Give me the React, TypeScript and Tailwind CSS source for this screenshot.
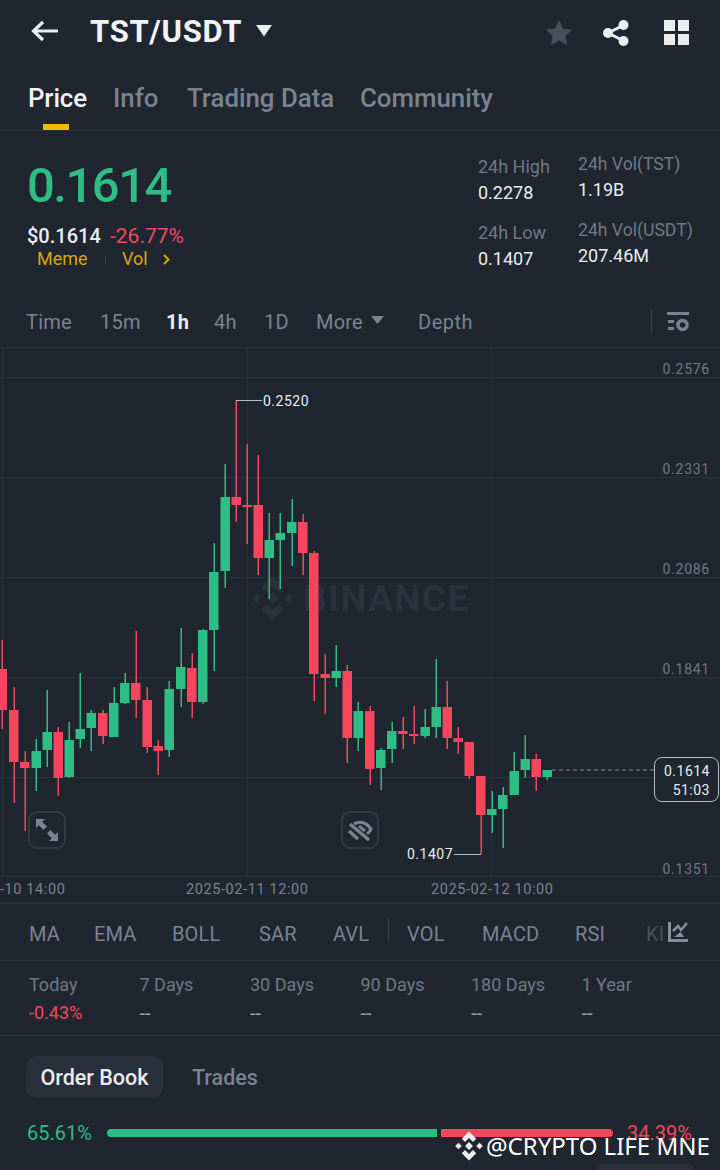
import React from "react";

type C = [number, number, number, number, number, number];
// x, wickTop, wickBottom, bodyTop, bodyBottom, up(1)/down(0)
const candles: C[] = [
  [2, 640, 729, 669, 710, 0],
  [13.5, 687, 803, 710, 762, 0],
  [24.5, 751, 831, 762, 768, 0],
  [36, 739, 791, 751, 768, 1],
  [47, 690, 767, 732, 750, 1],
  [58, 727, 796, 732, 778, 0],
  [69, 722, 778, 740, 777, 1],
  [80, 673, 748, 729, 739, 1],
  [91, 710, 751, 713, 728, 1],
  [102.5, 710, 744, 713, 736, 0],
  [113.5, 687, 737, 703, 737, 1],
  [124.5, 673, 704, 683, 703, 1],
  [135.5, 631, 718, 683, 700, 0],
  [147, 687, 753, 700, 747, 0],
  [158, 740, 775, 746, 751, 0],
  [169, 681, 757, 689, 750, 1],
  [180.5, 628, 707, 667, 689, 1],
  [191.5, 653, 718, 668, 702, 0],
  [202.5, 629, 704, 630, 702, 1],
  [213.5, 543, 671, 572, 630, 1],
  [225, 464, 588, 497, 571, 1],
  [236, 400, 522, 497, 505, 0],
  [247, 444, 544, 505, 507, 0],
  [258, 455, 575, 505, 558, 0],
  [269, 513, 599, 540, 558, 1],
  [280, 513, 589, 533, 540, 1],
  [291.5, 499, 566, 522, 533, 1],
  [302.5, 514, 575, 522, 553, 0],
  [313.5, 551, 701, 553, 674, 0],
  [325, 654, 714, 674, 678, 0],
  [336, 645, 687, 671, 678, 1],
  [347, 665, 763, 671, 738, 0],
  [358, 702, 751, 711, 738, 1],
  [369.5, 706, 785, 711, 769, 0],
  [380.5, 748, 790, 750, 768, 1],
  [391.5, 722, 763, 731, 749, 1],
  [402.5, 717, 749, 731, 734, 0],
  [413.5, 706, 744, 734, 735, 0],
  [425, 709, 738, 727, 736, 1],
  [436, 659, 738, 707, 727, 1],
  [447, 681, 749, 707, 738, 0],
  [458, 727, 754, 738, 742, 0],
  [469, 742, 779, 742, 776, 0],
  [480.5, 776, 854, 776, 815, 0],
  [491.5, 791, 833, 809, 815, 1],
  [502.5, 787, 848, 795, 809, 1],
  [514, 752, 795, 771, 795, 1],
  [525, 735, 778, 759, 770, 1],
  [536, 754, 791, 759, 777, 0],
  [547, 770, 780, 770, 777, 1],
];

const GREEN = "#2ebd85";
const RED = "#f6465d";
const FONT = "Roboto, 'Liberation Sans', sans-serif";

function BinanceMark({ x, y, s, fill }: { x: number; y: number; s: number; fill: string }) {
  return (
    <g transform={`translate(${x} ${y}) scale(${s})`} fill={fill}>
      <path d="M0-22 11-11 6-6 0-12-6-6-11-11Z" />
      <path d="M0 22 11 11 6 6 0 12-6 6-11 11Z" />
      <path d="M-21 0-16-5-11 0-16 5Z" />
      <path d="M21 0 16-5 11 0 16 5Z" />
      <path d="M0-6 6 0 0 6-6 0Z" />
    </g>
  );
}

function Chart() {
  const axis = [
    ["0.2576", 374],
    ["0.2331", 474],
    ["0.2086", 574],
    ["0.1841", 674],
    ["0.1351", 874],
  ] as const;
  return (
    <svg width="720" height="529" viewBox="0 348 720 529" className="block" style={{ fontFamily: FONT }}>
      {[377.5, 477.5, 577.5, 677.5, 777.5, 876.5].map((y) => (
        <line key={y} x1="0" x2="720" y1={y} y2={y} stroke="#2b323d" strokeWidth="1" />
      ))}
      {[2.5, 247.5, 491.5].map((x) => (
        <line key={x} x1={x} x2={x} y1="348" y2="877" stroke="#2b323d" strokeWidth="1" />
      ))}
      <g>
        <BinanceMark x={272.5} y={598} s={1} fill="#2b323d" />
        <text x="303" y="611" fontSize="37" fontWeight="700" fill="#2b323d" letterSpacing="1.4">BINANCE</text>
      </g>
      {candles.map(([x, wt, wb, bt, bb, up]) => {
        const col = up ? GREEN : RED;
        return (
          <g key={x} fill={col}>
            <rect x={Math.round(x) - 0.5} y={wt} width="1.5" height={wb - wt} />
            <rect x={x - 4.5} y={bt} width="9.5" height={Math.max(bb - bt, 2)} />
          </g>
        );
      })}
      <line x1="236" x2="262" y1="400.5" y2="400.5" stroke="#b7bdc6" />
      <text x="263" y="406" fontSize="14" fill="#eaecef" letterSpacing="0.5">0.2520</text>
      <line x1="454" x2="481" y1="854.5" y2="854.5" stroke="#b7bdc6" />
      <text x="407" y="859" fontSize="14" fill="#eaecef" letterSpacing="0.5">0.1407</text>
      <line x1="552" x2="654" y1="770" y2="770" stroke="#848e9c" strokeDasharray="4 3" strokeWidth="1.2" />
      {axis.map(([t, y]) => (
        <text key={t} x="710" y={y} fontSize="14" textAnchor="end" fill="#6f7884" letterSpacing="0.75">{t}</text>
      ))}
    </svg>
  );
}

function ChartButton({ children }: { children: React.ReactNode }) {
  return (
    <div className="w-[38px] h-[38px] rounded-[9px] border-2 border-[#323946] flex items-center justify-center">
      {children}
    </div>
  );
}

function Tf({ w, active, children }: { w: number; active?: boolean; children: React.ReactNode }) {
  return (
    <div style={{ width: w }} className={active ? "shrink-0 text-[#eaecef] font-bold" : "shrink-0 text-[#7a8390]"}>
      {children}
    </div>
  );
}

const indicators: [string, number][] = [
  ["MA", 65],
  ["EMA", 78],
  ["BOLL", 87],
  ["SAR", 74],
  ["AVL", 55],
];
const indicators2: [string, number][] = [
  ["VOL", 75],
  ["MACD", 93],
  ["RSI", 71],
];
const periods = [
  ["Today", "-0.43%"],
  ["7 Days", "--"],
  ["30 Days", "--"],
  ["90 Days", "--"],
  ["180 Days", "--"],
  ["1 Year", "--"],
];

export default function App() {
  return (
    <div
      className="relative w-[720px] h-[1170px] overflow-hidden bg-[#1f2630] text-[#eaecef]"
      style={{ fontFamily: FONT }}
    >
      {/* header */}
      <div className="h-[65px] flex items-center pl-[31px] pr-[31px]">
        <svg width="28" height="24" viewBox="0 0 28 24" className="shrink-0 mb-[3px]">
          <path d="M12 3 2.5 12 12 21M3 12H27" fill="none" stroke="#eaecef" strokeWidth="3.2" />
        </svg>
        <div className="ml-[31px] text-[31px] font-bold tracking-[0.7px] text-[#f2f3f5]">TST/USDT</div>
        <svg width="18" height="12" viewBox="0 0 18 12" className="ml-[13px] mb-[3px]">
          <path d="M1 0H17L9 11.5Z" fill="#eaecef" />
        </svg>
        <div className="ml-auto flex items-center">
          <svg width="28" height="27" viewBox="0 0 28 27">
            <path d="M14 1 18 9.6 27 10.8 20.4 17 22.2 26 14 21.5 5.8 26 7.6 17 1 10.8 10 9.6Z" fill="#474f5c" />
          </svg>
          <svg width="28" height="28" viewBox="0 0 28 28" className="ml-[29px]">
            <path d="M22 6 6 14 22 22" fill="none" stroke="#eaecef" strokeWidth="3" />
            <circle cx="21.5" cy="6" r="5" fill="#eaecef" />
            <circle cx="6" cy="14" r="5" fill="#eaecef" />
            <circle cx="21.5" cy="22" r="5" fill="#eaecef" />
          </svg>
          <svg width="25" height="25" viewBox="0 0 25 25" className="ml-[34px] mr-[0px]">
            <path d="M0 0H11V11H0ZM14 0H25V11H14ZM0 14H11V25H0ZM14 14H25V25H14Z" fill="#eaecef" />
          </svg>
        </div>
      </div>

      {/* tabs */}
      <div className="h-[66px] relative border-b border-[#2d343f] flex items-start pt-[15px] pl-[28px] text-[25.8px] leading-[36px] font-medium text-[#7a8390]">
        <div className="w-[85px] text-[#f2f3f5] tracking-[-0.1px]">Price</div>
        <div className="w-[74px]">Info</div>
        <div className="w-[173px]">Trading Data</div>
        <div>Community</div>
        <div className="absolute left-[43px] bottom-0 w-[26px] h-[6px] bg-[#f0b90b]" />
      </div>

      {/* price stats */}
      <div className="h-[169px] relative flex">
        <div className="w-[478px] pl-[27px] shrink-0">
          <div className="mt-[26px] h-[58px] leading-[58px] text-[49px] font-medium tracking-[-1.5px] text-[#2ebd85]">0.1614</div>
          <div className="mt-[8px] flex items-center text-[20px] leading-[26px]">
            <span className="w-[83px] font-medium text-[#eaecef]">$0.1614</span>
            <span className="text-[21px] text-[#f6465d]">-26.77%</span>
          </div>
          <div className="mt-[-2px] ml-[10px] flex items-center text-[18px] leading-[24px] text-[#dba50f]">
            <span className="w-[68px]">Meme</span>
            <span className="w-[1px] h-[9px] bg-[#3b424e]" />
            <span className="ml-[16px] w-[41px]">Vol</span>
            <svg width="7" height="11" viewBox="0 0 7 11">
              <path d="M1 1 5.5 5.5 1 10" fill="none" stroke="#dba50f" strokeWidth="2" />
            </svg>
          </div>
        </div>
        <div className="w-[100px] shrink-0 pt-[23px]">
          <div className="text-[18px] leading-[26px] text-[#6f7884]">24h High</div>
          <div className="text-[18px] leading-[26px] text-[#eaecef]">0.2278</div>
          <div className="mt-[14px] text-[18px] leading-[26px] text-[#6f7884]">24h Low</div>
          <div className="text-[18px] leading-[26px] text-[#eaecef]">0.1407</div>
        </div>
        <div className="shrink-0 pt-[20px]">
          <div className="text-[17.6px] leading-[26px] text-[#6f7884]">24h Vol(TST)</div>
          <div className="text-[18px] leading-[26px] text-[#eaecef]">1.19B</div>
          <div className="mt-[14px] text-[17.6px] leading-[26px] text-[#6f7884] whitespace-nowrap">24h Vol(USDT)</div>
          <div className="text-[18px] leading-[26px] text-[#eaecef]">207.46M</div>
        </div>
      </div>

      {/* timeframe */}
      <div className="h-[48px] pl-[26px] pb-[4px] flex items-center text-[20px] leading-[26px] tracking-[0.2px] border-b border-[#2b323d]">
        <Tf w={74}>Time</Tf>
        <Tf w={66}>15m</Tf>
        <Tf w={48} active>1h</Tf>
        <Tf w={50}>4h</Tf>
        <Tf w={52}>1D</Tf>
        <Tf w={55}>More</Tf>
        <svg width="13" height="8" viewBox="0 0 13 8" className="mb-[4px] shrink-0">
          <path d="M0 0H13L6.500 8Z" fill="#7a8390" />
        </svg>
        <div className="ml-[34px] text-[#7a8390] shrink-0 tracking-[0.5px]">Depth</div>
        <div className="ml-auto mr-[31px] flex items-center">
          <div className="w-[1px] h-[24px] bg-[#3b424e]" />
          <svg width="22" height="20" viewBox="0 0 22 20" className="ml-[15px]">
            <path d="M0 0H22V3H0ZM1 8H7V11H1ZM1 15H7V18H1Z" fill="#79828f" />
            <circle cx="15.500" cy="13" r="4.500" fill="none" stroke="#79828f" strokeWidth="3.500" />
          </svg>
        </div>
      </div>

      {/* chart */}
      <div className="relative h-[529px]">
        <Chart />
        <div className="absolute left-[28px] top-[463px]">
          <ChartButton>
            <svg width="24" height="24" viewBox="0 0 24 24">
              <path d="M1 1H10L7.200 3.800 12 8.600 8.600 12 3.800 7.200 1 10Z" fill="#7a8390" />
              <path d="M23 23H14L16.800 20.200 12 15.400 15.400 12 20.200 16.800 23 14Z" fill="#7a8390" />
            </svg>
          </ChartButton>
        </div>
        <div className="absolute left-[341px] top-[463px]">
          <ChartButton>
            <svg width="26" height="24" viewBox="0 0 26 24">
              <path d="M7 6C13 2 20 5 24 11 23 14 21 15 20 16" fill="none" stroke="#7a8390" strokeWidth="3" />
              <path d="M3 6 22 22M2 13 11 21" fill="none" stroke="#7a8390" strokeWidth="3.500" />
              <path d="M12 8 18 13" fill="none" stroke="#7a8390" strokeWidth="3" />
            </svg>
          </ChartButton>
        </div>
        <div className="absolute left-[654px] top-[409px] w-[65px] h-[45px] rounded-[8px] border-[1.5px] border-[#b7bdc6] bg-[#1f2630] text-right pr-[8px] text-[14px] leading-[19px] tracking-[0.5px] text-[#eaecef] pt-[3.5px]">
          <div>0.1614</div>
          <div>51:03</div>
        </div>
      </div>

      {/* time axis */}
      <div className="h-[27px] relative border-b-2 border-[#2b323d] text-[14.500px] leading-[26px] tracking-[0.6px] text-[#7a8390]">
        <div className="absolute left-[0px] top-0 whitespace-nowrap">-10 14:00</div>
        <div className="absolute left-[186px] top-0 whitespace-nowrap">2025-02-11 12:00</div>
        <div className="absolute left-[431px] top-0 whitespace-nowrap">2025-02-12 10:00</div>
      </div>

      {/* indicators */}
      <div className="h-[57px] pt-[4px] relative border-b border-[#2d343f] flex items-center pl-[29px] text-[20px] tracking-[0.15px] text-[#7a8390]">
        {indicators.map(([t, w]) => (
          <div key={t} style={{ width: w }} className="shrink-0">{t}</div>
        ))}
        <div className="w-[1px] h-[22px] bg-[#3b424e] shrink-0 mb-[8px]" />
        <div className="w-[18px] shrink-0" />
        {indicators2.map(([t, w]) => (
          <div key={t} style={{ width: w }} className="shrink-0">{t}</div>
        ))}
        <div className="text-[#4a515d] shrink-0 whitespace-nowrap">KI</div>
        <svg width="20" height="20" viewBox="0 0 20 20" className="absolute left-[668px] top-[18px]">
          <path d="M1.500 0V18.500H20" fill="none" stroke="#848e9c" strokeWidth="3" />
          <path d="M5 9 10 4 13 8 19 1" fill="none" stroke="#848e9c" strokeWidth="2.500" />
          <path d="M6 15 12.500 10 16 15Z" fill="#848e9c" />
        </svg>
      </div>

      {/* periods */}
      <div className="h-[75px] border-b border-[#2d343f] flex pl-[29px] pt-[11px]">
        {periods.map(([a, b], i) => (
          <div key={a} className="w-[110.500px] shrink-0">
            <div className="text-[18px] leading-[26px] text-[#6f7884]">{a}</div>
            <div className={i === 0 ? "mt-[2px] text-[18px] leading-[26px] text-[#f6465d]" : "mt-[2px] text-[20px] leading-[26px] text-[#9aa2ae]"}>
              {b}
            </div>
          </div>
        ))}
      </div>

      {/* order book */}
      <div className="pl-[26px] pt-[20px]">
        <div className="flex items-center h-[42px]">
          <div className="w-[137px] h-[42px] pt-[2px] rounded-[10px] bg-[#2a303b] flex items-center justify-center text-[21.5px] font-medium text-[#eaecef]">Order Book</div>
          <div className="ml-[29px] pt-[2px] text-[21.5px] text-[#7a8390] font-medium">Trades</div>
        </div>
        <div className="mt-[23px] flex items-center h-[24px] pr-[28px]">
          <div className="w-[81px] pl-[1px] shrink-0 text-[20px] text-[#2ebd85]">65.61%</div>
          <div className="w-[330px] h-[8px] rounded-l-full bg-[#2ebd85] shrink-0" />
          <div className="w-[172px] h-[8px] ml-[4px] rounded-r-full bg-[#f6465d] shrink-0" />
          <div className="ml-auto text-[20px] text-[#f6465d]">34.39%</div>
        </div>
      </div>
      <div className="absolute left-[597px] top-[1164px] w-[97px] h-[10px] rounded-t-[6px] bg-[#2a303b]" />

      {/* watermark */}
      <div className="absolute left-[454px] top-[1131px] flex items-center">
        <svg width="30" height="30" viewBox="-15 -15 30 30" className="shrink-0">
          <BinanceMark x={0} y={0} s={0.66} fill="#eaecef" />
        </svg>
        <div className="ml-[2px] text-[24px] leading-[30px] whitespace-nowrap text-white" style={{ fontFamily: "'Noto Sans', sans-serif" }}>@CRYPTO LIFE MNE</div>
      </div>
    </div>
  );
}
